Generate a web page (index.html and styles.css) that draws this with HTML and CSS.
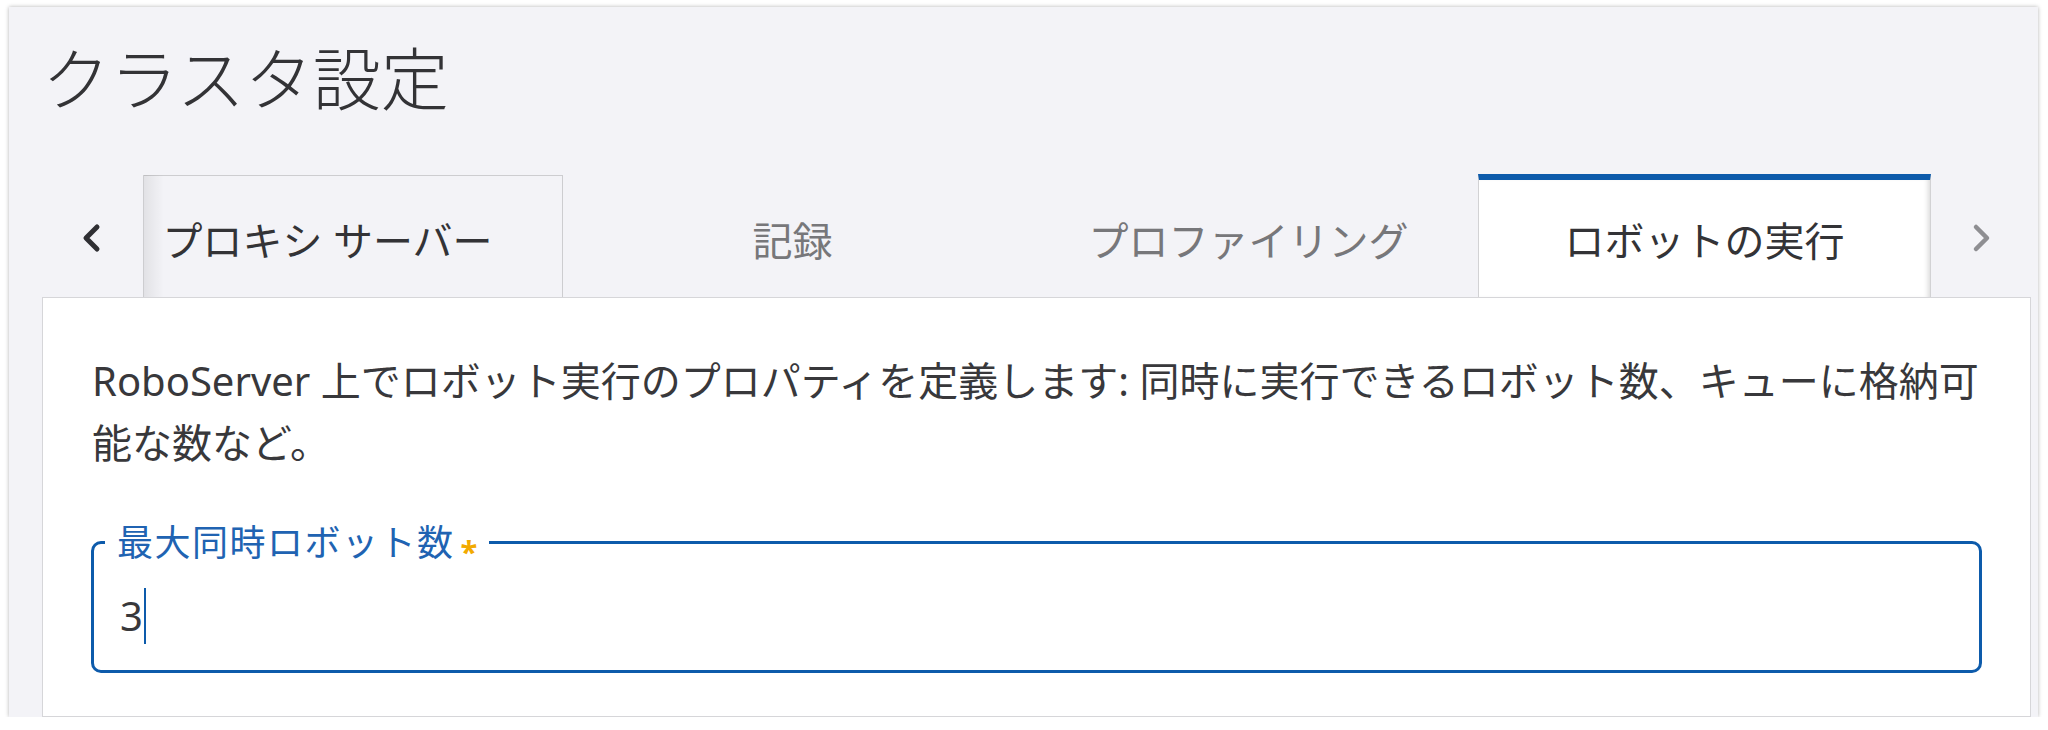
FILE: index.html
```html
<!DOCTYPE html>
<html lang="ja">
<head>
<meta charset="utf-8">
<title>クラスタ設定</title>
<link rel="stylesheet" href="styles.css">
</head>
<body>
<div class="panel">
  <h1 class="title">クラスタ設定</h1>
  <div class="tabbar">
    <button class="tab-nav prev" aria-label="前へ">
      <svg width="22" height="30" viewBox="0 0 22 30"><path d="M17 4 L6 15 L17 26" fill="none" stroke="#2f2f33" stroke-width="5" stroke-linecap="round" stroke-linejoin="round"/></svg>
    </button>
    <div class="tab-viewport">
      <div class="tab tab-partial">プロキシ サーバー</div>
      <div class="tab">記録</div>
      <div class="tab">プロファイリング</div>
      <div class="tab active">ロボットの実行</div>
    </div>
    <button class="tab-nav next" aria-label="次へ">
      <svg width="22" height="30" viewBox="0 0 22 30"><path d="M5 4 L16 15 L5 26" fill="none" stroke="#8e8e92" stroke-width="4.5" stroke-linecap="round" stroke-linejoin="round"/></svg>
    </button>
  </div>
  <div class="content">
    <p class="desc">RoboServer 上でロボット実行のプロパティを定義します: 同時に実行できるロボット数、キューに格納可能な数など。</p>
    <fieldset class="field">
      <legend>最大同時ロボット数<span class="req">*</span></legend>
      <div class="value">3<span class="caret"></span></div>
    </fieldset>
  </div>
</div>
</body>
</html>
```
FILE: styles.css
```css
html, body {
  margin: 0;
  background: #ffffff;
}

body {
  font-family: "Noto Sans", "Noto Sans CJK JP", sans-serif;
  color: #333333;
}

.panel {
  margin: 7px 10px 0 9px;
  height: 710px;
  box-sizing: border-box;
  background: #f3f3f7;
  box-shadow: 0 0 4px rgba(0, 0, 0, 0.3);
  padding: 38px 7px 0 33px;
  display: flex;
  flex-direction: column;
  overflow: hidden;
}

.title {
  margin: 0;
  font-size: 68px;
  line-height: 68px;
  font-weight: 300;
  color: #333336;
}

.tabbar {
  display: flex;
  align-items: flex-end;
  height: 123px;
  margin-top: 61px;
  flex: 0 0 auto;
}

.tab-nav {
  height: 100%;
  border: 0;
  background: none;
  padding: 5px 0 0 0;
  display: flex;
  align-items: center;
  box-sizing: border-box;
  cursor: pointer;
}

.tab-nav.prev {
  width: 101px;
  justify-content: flex-end;
  padding-right: 41px;
}

.tab-nav.next {
  width: 100px;
  justify-content: flex-start;
  padding-left: 40px;
}

.tab-viewport {
  flex: 1;
  height: 100%;
  display: flex;
  align-items: flex-end;
  gap: 3px;
  overflow: hidden;
  position: relative;
}

.tab-viewport::before {
  content: "";
  position: absolute;
  left: 0;
  top: 1px;
  bottom: 0;
  width: 20px;
  border-left: 1px solid #cdcdd0;
  background: linear-gradient(to right, rgba(0, 0, 0, 0.07), rgba(0, 0, 0, 0));
  z-index: 1;
}

.tab {
  flex: 0 0 453px;
  height: 123px;
  box-sizing: border-box;
  padding-top: 6px;
  display: flex;
  align-items: center;
  justify-content: center;
  font-size: 40px;
  color: #77777a;
  white-space: nowrap;
}

.tab-partial {
  margin-left: -33px;
  height: 122px;
  padding-top: 5px;
  padding-right: 18px;
  background: #f3f3f7;
  border: 1px solid #cdcdd0;
  border-bottom: 0;
  color: #333336;
}

.tab.active {
  background: #ffffff;
  border: 1px solid #d2d2d4;
  border-top: 6px solid #0d5bab;
  border-bottom: 0;
  padding-top: 0;
  color: #333336;
  box-shadow: inset -5px 0 5px -3px rgba(0, 0, 0, 0.15);
}

.content {
  flex: 1;
  background: #ffffff;
  border: 1px solid #d6d6d9;
  padding: 52px 48px 0 49px;
}

.desc {
  margin: 0 -10px 0 0;
  font-size: 40px;
  line-height: 62px;
  color: #38383b;
}

.field {
  margin: 42px 0 0 -1px;
  border: 3px solid #0d5bab;
  border-radius: 10px;
  padding: 19px 0 26px 11px;
  min-width: 0;
}

.field legend {
  padding: 9px 10px 0 12px;
  font-size: 36px;
  line-height: 36px;
  letter-spacing: 1.5px;
  color: #2063b2;
}

.req {
  color: #f2aa00;
  font-size: 31px;
  font-weight: 700;
  margin-left: 6px;
  vertical-align: -7px;
}

.value {
  display: flex;
  align-items: center;
  padding-left: 15px;
  font-size: 40px;
  line-height: 56px;
  color: #38383b;
}

.caret {
  display: block;
  width: 2px;
  height: 56px;
  margin-left: 1px;
  background: #0d5bab;
}
```
